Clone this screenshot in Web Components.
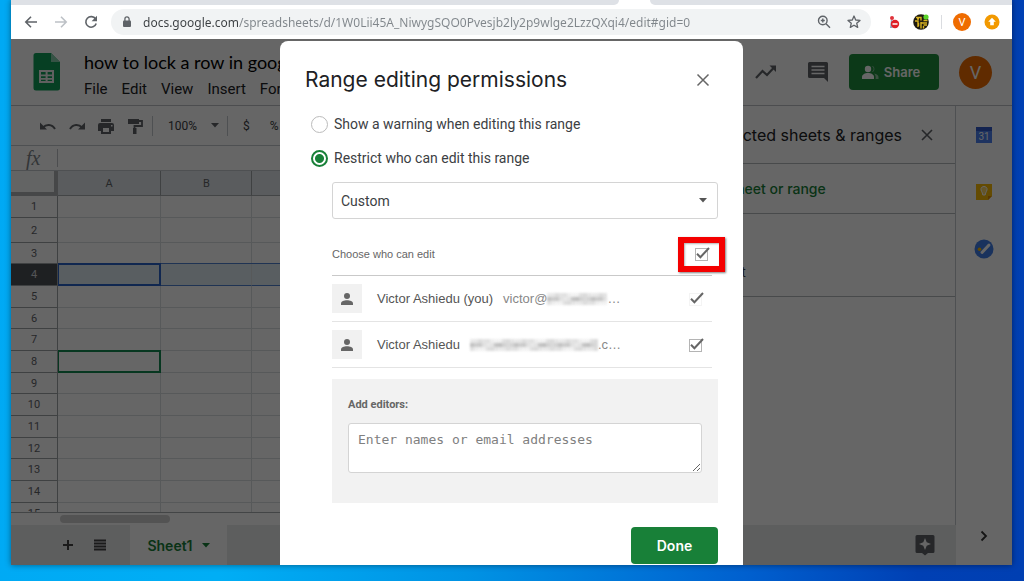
<!DOCTYPE html>
<html lang="en">
<head>
<meta charset="utf-8">
<title>how to lock a row in google sheets</title>
<style>
    html, body {
        height: 100%;
    }

    body {
        margin: 0;
        overflow: hidden;
        font-family: Roboto, "Liberation Sans", sans-serif;
        background: linear-gradient(95deg, #00a9f4 0%, #00aef5 25%, #0093e4 48%, #0060cf 74%, #0040b4 90%, #003fb2 100%);
    }
</style>
</head>
<body>
<browser-window>
    <browser-toolbar slot="toolbar"></browser-toolbar>
    <sheets-app>
        <permissions-dialog></permissions-dialog>
    </sheets-app>
</browser-window>

<script>
    class BaseElement extends HTMLElement {
        constructor() {
            super();
            this.attachShadow({ mode: 'open' });
        }

        connectedCallback() {
            this.shadowRoot.innerHTML = `
                <style>
                    *, :host { box-sizing: border-box; }
                    button {
                        border: none;
                        background: none;
                        padding: 0;
                        margin: 0;
                        font: inherit;
                        color: inherit;
                        display: flex;
                        align-items: center;
                        justify-content: center;
                        cursor: pointer;
                    }
                    svg { display: block; flex: none; }
                </style>
                ${this.template()}
            `;
        }
    }

    class BrowserWindow extends BaseElement {
        template() {
            return `
                <style>
                    :host {
                        display: block;
                        height: 100%;
                        padding: 0 12px 16px 11px;
                    }
                    .frame {
                        height: 100%;
                        display: flex;
                        flex-direction: column;
                        background: #fff;
                        box-shadow: 0 0 6px rgba(0, 0, 0, 0.45);
                    }
                    .tabs {
                        display: flex;
                        height: 5px;
                        flex: none;
                    }
                    .tabs span { background: #dee1e6; }
                    .before { flex: 608; border-bottom-right-radius: 5px; }
                    .active { width: 31px; }
                    .after { flex: 362; border-bottom-left-radius: 5px; }
                </style>
                <div class="frame">
                    <div class="tabs">
                        <span class="before"></span>
                        <div class="active"></div>
                        <span class="after"></span>
                    </div>
                    <slot name="toolbar"></slot>
                    <slot></slot>
                </div>
            `;
        }
    }
    customElements.define('browser-window', BrowserWindow);

    class BrowserToolbar extends BaseElement {
        template() {
            return `
                <style>
                    :host {
                        display: flex;
                        align-items: center;
                        flex: none;
                        height: 34px;
                        padding: 0 12px;
                        color: #5f6368;
                    }
                    .nav { display: flex; gap: 14px; }
                    .omnibox {
                        flex: 1;
                        display: flex;
                        align-items: center;
                        gap: 9px;
                        height: 26px;
                        margin: 0 14px 0 12px;
                        padding: 0 9px;
                        border-radius: 13px;
                        background: #f1f3f4;
                    }
                    input {
                        flex: 1;
                        min-width: 0;
                        border: none;
                        padding: 0;
                        outline: none;
                        font: 12px "Noto Sans", "Open Sans", sans-serif;
                        color: transparent;
                        background: linear-gradient(90deg, #3c4043 96px, #80868b 96px);
                        -webkit-background-clip: text;
                        background-clip: text;
                    }
                    .mark { margin-right: 5px; }
                    .extensions { display: flex; align-items: center; }
                    .ext { width: 18px; height: 18px; margin-right: 9px; }
                    .sep { width: 1px; height: 14px; background: #dadce0; margin: 0 11px 0 2px; }
                    .avatar {
                        width: 18px;
                        height: 18px;
                        border-radius: 50%;
                        background: #ef6c00;
                        color: #fff;
                        font-size: 11px;
                        margin-right: 13px;
                    }
                </style>
                <div class="nav">
                    <button aria-label="Back"><svg width="16" height="16" viewBox="0 0 16 16" fill="none" stroke="#5f6368" stroke-width="1.6"><path d="M14 8H3M8 2.8L2.8 8 8 13.2"/></svg></button>
                    <button aria-label="Forward"><svg width="16" height="16" viewBox="0 0 16 16" fill="none" stroke="#bdc1c6" stroke-width="1.6"><path d="M2 8h11M8 2.8L13.2 8 8 13.2"/></svg></button>
                    <button aria-label="Reload"><svg width="16" height="16" viewBox="0 0 16 16"><path d="M12.6 5A5.3 5.3 0 1 0 13.2 9.5" fill="none" stroke="#5f6368" stroke-width="1.6"/><path d="M14 1.8v5.4H8.6z" fill="#5f6368"/></svg></button>
                </div>
                <div class="omnibox">
                    <svg width="14" height="14" viewBox="0 0 14 14"><rect x="3" y="5.5" width="8" height="6.5" rx="1" fill="#5f6368"/><path d="M4.9 6V4a2.1 2.1 0 0 1 4.2 0v2" fill="none" stroke="#5f6368" stroke-width="1.3"/></svg>
                    <input type="text" aria-label="Address" value="docs.google.com/spreadsheets/d/1W0Lii45A_NiwygSQO0Pvesjb2ly2p9wlge2LzzQXqi4/edit#gid=0">
                    <button class="mark" aria-label="Zoom"><svg width="16" height="16" viewBox="0 0 16 16" fill="none" stroke="#5f6368" stroke-width="1.4"><circle cx="6.8" cy="6.5" r="4.3"/><path d="M10 9.7l4 4M4.8 6.5h4M6.8 4.5v4"/></svg></button>
                    <button aria-label="Bookmark"><svg width="16" height="16" viewBox="0 0 16 16" fill="none" stroke="#5f6368" stroke-width="1.3" stroke-linejoin="round"><path d="M8 2l1.7 4 4.3.4-3.3 2.8 1 4.2L8 11.2l-3.7 2.2 1-4.2L2 6.4 6.3 6z"/></svg></button>
                </div>
                <div class="extensions">
                    <button class="ext" aria-label="Blocker"><svg width="18" height="18" viewBox="0 0 18 18"><path d="M6 6l5 6-4 3H5z" fill="#8ea6c0"/><circle cx="7" cy="5" r="2" fill="#e0323a"/><circle cx="10" cy="11" r="4.2" fill="#df1f26"/><path d="M7.5 11h5" stroke="#fff" stroke-width="1.5"/></svg></button>
                    <button class="ext" aria-label="Maze"><svg width="18" height="18" viewBox="0 0 18 18"><circle cx="9" cy="9" r="7.8" fill="#1d1a10"/><path d="M4 4.5h5v3M3 8h3v6M5 6h2M9 9v6.5M9 10h6M11.5 12H15M11.5 7.5h4M6.5 10v3M11.5 13v2.5" fill="none" stroke="#d9b321" stroke-width="1.4"/><circle cx="14" cy="4" r="2.6" fill="#5ad42a"/></svg></button>
                    <div class="sep"></div>
                    <button class="avatar">V</button>
                    <button aria-label="Update"><svg width="16" height="16" viewBox="0 0 16 16"><circle cx="8" cy="8" r="7.5" fill="#f29900"/><path d="M8 3.8l3.8 4H9.8v3.4H6.2V7.8H4.2z" fill="#fff"/></svg></button>
                </div>
            `;
        }
    }
    customElements.define('browser-toolbar', BrowserToolbar);

    class SheetsApp extends BaseElement {
        template() {
            return `
                <style>
                    :host {
                        flex: 1;
                        min-height: 0;
                        display: grid;
                        overflow: hidden;
                    }
                    .app, .scrim { grid-area: 1 / 1; min-width: 0; min-height: 0; }
                    .app { display: flex; flex-direction: column; }
                    .body { flex: 1; display: flex; min-height: 0; }
                    .main { flex: 1; display: flex; flex-direction: column; min-width: 0; }
                    .work { flex: 1; display: flex; min-height: 0; }
                    .sheet { flex: 1; display: flex; flex-direction: column; min-width: 0; overflow: hidden; }
                    .scrim {
                        display: flex;
                        justify-content: center;
                        padding-top: 2px;
                        background: rgba(0, 0, 0, 0.6);
                        z-index: 1;
                    }
                </style>
                <div class="app">
                    <sheets-header></sheets-header>
                    <div class="body">
                        <div class="main">
                            <div class="work">
                                <div class="sheet">
                                    <sheets-toolbar></sheets-toolbar>
                                    <sheet-grid></sheet-grid>
                                </div>
                                <protected-panel></protected-panel>
                            </div>
                            <sheet-tabs></sheet-tabs>
                        </div>
                        <side-rail></side-rail>
                    </div>
                </div>
                <div class="scrim"><slot></slot></div>
            `;
        }
    }
    customElements.define('sheets-app', SheetsApp);

    class SheetsHeader extends BaseElement {
        template() {
            return `
                <style>
                    :host {
                        display: flex;
                        align-items: center;
                        flex: none;
                        height: 67px;
                        padding: 0 20px 0 22px;
                        border-bottom: 1px solid #bdc1c6;
                    }
                    .doc { flex: 1; margin-left: 23px; padding-top: 4px; min-width: 0; }
                    h1 {
                        margin: 0 0 5px;
                        font: 18px/24px Lato, sans-serif;
                        color: #000;
                        white-space: nowrap;
                    }
                    .menu { display: flex; gap: 14px; font-size: 15px; line-height: 20px; color: #202124; }
                    .activity { margin-right: 29px; }
                    .comments { margin-right: 20px; }
                    .share {
                        height: 36px;
                        width: 90px;
                        padding-right: 6px;
                        gap: 5px;
                        border-radius: 4px;
                        background: #1e8e3e;
                        color: #fff;
                        font: 600 13px Inter, sans-serif;
                    }
                    .avatar {
                        width: 33px;
                        height: 33px;
                        margin-left: 20px;
                        border-radius: 50%;
                        background: #ef6c00;
                        color: #fff;
                        font-size: 18px;
                    }
                </style>
                <svg width="28" height="38" viewBox="0 0 28 38"><path d="M3 0h15l9 9v26a2.5 2.5 0 0 1-2.5 2.5H3A2.5 2.5 0 0 1 .5 35V2.5A2.5 2.5 0 0 1 3 0z" fill="#0f9d58"/><path d="M18 0l9 9h-9z" fill="#87ceac"/><path d="M6 17h15v13H6zM8 19v2.4h4.6V19zm6.6 0v2.4H19V19zM8 23.2v1.9h4.6v-1.9zm6.6 0v1.9H19v-1.9zM8 26.8V28h4.6v-1.2zm6.6 0V28H19v-1.2z" fill="#f1f1f1" fill-rule="evenodd"/></svg>
                <div class="doc">
                    <h1>how to lock a row in google sheets</h1>
                    <div class="menu">
                        <button>File</button>
                        <button>Edit</button>
                        <button>View</button>
                        <button>Insert</button>
                        <button>Format</button>
                    </div>
                </div>
                <button class="activity" aria-label="Activity"><svg width="24" height="24" viewBox="0 0 24 24"><path d="M2 18l6.5-7 4.5 4 7-7.5" fill="none" stroke="#5f6368" stroke-width="2.2"/><path d="M15.5 5.5H22V12z" fill="#5f6368"/></svg></button>
                <button class="comments" aria-label="Comments"><svg width="22" height="22" viewBox="0 0 22 22"><path d="M2.5 1h17A1.5 1.5 0 0 1 21 2.5V21l-4-4H2.5A1.5 1.5 0 0 1 1 15.5v-13A1.5 1.5 0 0 1 2.5 1z" fill="#5f6368"/><path d="M4.5 5.5h13M4.5 9h13M4.5 12.5h13" stroke="#fff" stroke-width="1.6"/></svg></button>
                <button class="share"><svg width="17" height="15" viewBox="0 0 17 15" fill="#fff"><circle cx="6" cy="4" r="3.2"/><path d="M0 14v-2c0-2.5 3-4 6-4s6 1.5 6 4v2z"/><path d="M9.6 7a3.2 3.2 0 0 0 0-6 3 3 0 0 1 2.8 3 3 3 0 0 1-2.8 3zM12 8.5c2.5.4 4.5 1.7 4.5 3.5v2h-2.9v-2c0-1.5-.6-2.6-1.6-3.5z" opacity=".5"/></svg>Share</button>
                <button class="avatar">V</button>
            `;
        }
    }
    customElements.define('sheets-header', SheetsHeader);

    class SheetsToolbar extends BaseElement {
        template() {
            return `
                <style>
                    :host { display: block; flex: none; color: #5f6368; }
                    .tools {
                        display: flex;
                        align-items: center;
                        height: 40px;
                        padding-left: 28px;
                        border-bottom: 1px solid #c4c8cc;
                    }
                    .icons { display: flex; gap: 11px; margin-right: 8px; }
                    .sep { width: 1px; height: 20px; background: #c4c8cc; }
                    .text { font-size: 12px; white-space: nowrap; color: #3c4043; }
                    .zoom { gap: 14px; margin: 0 8px 0 15px; }
                    .money { margin: 0 20px 0 15px; }
                    .fx {
                        display: flex;
                        align-items: center;
                        height: 25px;
                        border-bottom: 1px solid #c4c8cc;
                        padding-left: 15px;
                        font: italic 20px "Liberation Serif", serif;
                        color: #80868b;
                    }
                    .fx i { width: 31px; }
                    .fx span { width: 1px; height: 18px; background: #bdc1c6; }
                </style>
                <div class="tools">
                    <div class="icons">
                        <button aria-label="Undo"><svg width="18" height="18" viewBox="0 0 18 18"><path d="M4 10.5c3-3.5 9-3.8 12 1.5" fill="none" stroke="#5f6368" stroke-width="2"/><path d="M1 5.5v7h7z" fill="#5f6368"/></svg></button>
                        <button aria-label="Redo"><svg width="18" height="18" viewBox="0 0 18 18"><path d="M14 10.5c-3-3.5-9-3.8-12 1.5" fill="none" stroke="#5f6368" stroke-width="2"/><path d="M17 5.5v7h-7z" fill="#5f6368"/></svg></button>
                        <button aria-label="Print"><svg width="18" height="18" viewBox="0 0 18 18" fill="#5f6368"><path d="M4 2h10v3H4z"/><path fill-rule="evenodd" d="M3 6h12a2 2 0 0 1 2 2v6h-3v3H4v-3H1V8a2 2 0 0 1 2-2zm3 5v4h6v-4zm8-3v1.5h1.5V8z"/></svg></button>
                        <button aria-label="Paint format"><svg width="18" height="18" viewBox="0 0 18 18"><path d="M2 2h11v5H2z" fill="#5f6368"/><path d="M13 4h3v5H8.5v8" fill="none" stroke="#5f6368" stroke-width="1.8"/><path d="M7 11h3.5v6H7z" fill="#5f6368"/></svg></button>
                    </div>
                    <div class="sep"></div>
                    <button class="text zoom">100%<svg width="8" height="5" viewBox="0 0 8 5"><path d="M0 0h8L4 4.5z" fill="#5f6368"/></svg></button>
                    <div class="sep"></div>
                    <button class="text money">$</button>
                    <button class="text">%</button>
                </div>
                <div class="fx"><i>fx</i><span></span></div>
            `;
        }
    }
    customElements.define('sheets-toolbar', SheetsToolbar);

    class SheetGrid extends BaseElement {
        template() {
            const cols = ['A', 'B', 'C', 'D', 'E'];
            const rows = [];
            for (let i = 1; i <= 15; i++) {
                rows.push(`<tr class="r${i}"><th>${i}</th>${cols.map(() => '<td></td>').join('')}</tr>`);
            }
            return `
                <style>
                    :host {
                        flex: 1;
                        min-height: 0;
                        display: flex;
                        flex-direction: column;
                    }
                    .scroll { flex: 1; min-height: 0; overflow: hidden; border-bottom: 1px solid #a8acb0; }
                    table {
                        table-layout: fixed;
                        border-collapse: separate;
                        border-spacing: 0;
                        width: 515px;
                    }
                    .head { width: 47px; }
                    .a { width: 103px; }
                    .b { width: 91px; }
                    th, td { padding: 0; }
                    th {
                        font-weight: normal;
                        font-size: 11px;
                        color: #5f6368;
                        border-bottom: 1px solid #9ea2a6;
                        border-right: 1px solid #9ea2a6;
                    }
                    td { border-right: 1px solid #dadfe2; border-bottom: 1px solid #dadfe2; }
                    thead th { height: 25px; background: #e1e7ea; border-bottom-color: #a8acb0; }
                    thead th:first-child {
                        background: #f8f9fa;
                        border-right: 4px solid #b0b2b4;
                        border-bottom: 4px solid #b0b2b4;
                    }
                    tbody tr { height: 22px; }
                    tbody tr:nth-child(3n) { height: 21px; }
                    tbody .r2 { height: 25px; }
                    .r4 th { background: #4d5156; color: #d0d3d6; }
                    .r4 td {
                        background: #dfebf2;
                        border-bottom-color: #4f7fd0;
                        box-shadow: 0 -1px #4f7fd0;
                    }
                    .r4 td:nth-child(2) { box-shadow: 0 -1px #2a62c8, inset 0 0 0 1px #2a62c8; border-color: #2a62c8; }
                    .r8 td:nth-child(2) { box-shadow: 0 -1px #128a52, inset 0 0 0 1px #128a52; border-color: #128a52; }
                    .track { flex: none; height: 12px; padding: 2px 0 2px 49px; }
                    .thumb { width: 110px; height: 8px; border-radius: 4px; background: #cfcfcf; }
                </style>
                <div class="scroll">
                    <table>
                        <colgroup><col class="head"><col class="a"><col class="b"><col class="b"><col class="b"><col class="b"></colgroup>
                        <thead><tr><th></th>${cols.map(c => `<th>${c}</th>`).join('')}</tr></thead>
                        <tbody>${rows.join('')}</tbody>
                    </table>
                </div>
                <div class="track"><div class="thumb"></div></div>
            `;
        }
    }
    customElements.define('sheet-grid', SheetGrid);

    class ProtectedPanel extends BaseElement {
        template() {
            return `
                <style>
                    :host {
                        display: block;
                        flex: none;
                        width: 300px;
                        border-left: 1px solid #dadce0;
                        border-right: 1px solid #c4c8cc;
                        font-family: Inter, sans-serif;
                    }
                    header, .add, .item {
                        display: flex;
                        align-items: center;
                        border-bottom: 1px solid #b4b9bc;
                        white-space: nowrap;
                    }
                    header { height: 58px; justify-content: flex-end; gap: 18px; padding-right: 21px; }
                    h2 { margin: 0; font-size: 16px; font-weight: 400; color: #202124; }
                    .add { height: 50px; padding-left: 16px; }
                    a { color: #188038; text-decoration: none; font-size: 14px; font-weight: 500; }
                    .item { height: 83px; padding: 34px 0 0 25px; font-size: 13px; color: #3c4043; }
                </style>
                <header>
                    <h2>Protected sheets &amp; ranges</h2>
                    <button aria-label="Close"><svg width="14" height="14" viewBox="0 0 14 14"><path d="M2 2l10 10M12 2L2 12" stroke="#5f6368" stroke-width="1.6"/></svg></button>
                </header>
                <div class="add"><a href="#">+ Add a sheet or range</a></div>
                <div class="item">This sheet</div>
            `;
        }
    }
    customElements.define('protected-panel', ProtectedPanel);

    class SheetTabs extends BaseElement {
        template() {
            return `
                <style>
                    :host {
                        display: flex;
                        align-items: center;
                        flex: none;
                        height: 40px;
                        padding: 0 21px 0 50px;
                        background: #e8ebec;
                    }
                    .icon { width: 14px; margin-right: 18px; }
                    .tab {
                        height: 100%;
                        width: 97px;
                        gap: 9px;
                        margin-left: 5px;
                        background: #fff;
                        color: #188038;
                        font: 600 14px Inter, sans-serif;
                    }
                    .explore { margin-left: auto; }
                </style>
                <button class="icon" aria-label="Add sheet"><svg width="12" height="12" viewBox="0 0 12 12"><path d="M6 1v10M1 6h10" stroke="#444" stroke-width="2"/></svg></button>
                <button class="icon" aria-label="All sheets"><svg width="14" height="14" viewBox="0 0 14 14"><path d="M1 2.5h12M1 5.5h12M1 8.5h12M1 11.5h12" stroke="#444" stroke-width="2"/></svg></button>
                <button class="tab">Sheet1<svg width="8" height="5" viewBox="0 0 8 5"><path d="M0 0h8L4 4.5z" fill="#188038"/></svg></button>
                <button class="explore" aria-label="Explore"><svg width="20" height="22" viewBox="0 0 20 22"><path d="M2 1h16a1.5 1.5 0 0 1 1.5 1.5v15A1.5 1.5 0 0 1 18 19h-5l-3 2.5L7 19H2A1.5 1.5 0 0 1 .5 17.5v-15A1.5 1.5 0 0 1 2 1z" fill="#5f6368"/><path d="M10 4l1.7 4.3L16 10l-4.3 1.7L10 16l-1.7-4.3L4 10l4.3-1.7z" fill="#fff"/></svg></button>
            `;
        }
    }
    customElements.define('sheet-tabs', SheetTabs);

    class SideRail extends BaseElement {
        template() {
            return `
                <style>
                    :host {
                        display: flex;
                        flex-direction: column;
                        align-items: center;
                        flex: none;
                        width: 56px;
                        padding: 19px 0 20px;
                        gap: 37px;
                    }
                    .more { margin-top: auto; }
                </style>
                <button aria-label="Calendar"><svg width="20" height="20" viewBox="0 0 20 20"><path d="M2 2h16v16H2z" fill="#4c7ff0"/><path d="M2 2h16v4H2z" fill="#3057c8"/><text x="10" y="15" text-anchor="middle" font-family="Roboto, sans-serif" font-size="10" fill="#fff">31</text></svg></button>
                <button aria-label="Keep"><svg width="20" height="20" viewBox="0 0 20 20"><path d="M2 2h16v12l-4 4H2z" fill="#f9bb05"/><path d="M18 14l-4 4v-4z" fill="#e08c00"/><path d="M7 6.5a3.2 3.2 0 0 1 6 0c.6 2-1.5 3.5-1.8 6.5H8.8C8.5 10 6.4 8.500 7 6.5z" fill="#fbd66a" stroke="#fff" stroke-width="1"/></svg></button>
                <button aria-label="Tasks"><svg width="20" height="20" viewBox="0 0 20 20"><circle cx="10" cy="10" r="9.5" fill="#3f7de8"/><path d="M8 13.5l7-7.5" stroke="#fff" stroke-width="3" stroke-linecap="round"/><circle cx="5.5" cy="10.3" r="1.8" fill="#fbbc04"/></svg></button>
                <button class="more" aria-label="Hide side panel"><svg width="18" height="18" viewBox="0 0 18 18"><path d="M6.5 4.5L11 9l-4.5 4.5" fill="none" stroke="#333" stroke-width="1.8"/></svg></button>
            `;
        }
    }
    customElements.define('side-rail', SideRail);

    class TickBox extends BaseElement {
        template() {
            const plain = this.hasAttribute('plain');
            return `
                <style>
                    :host { display: grid; width: 16px; height: 16px; flex: none; }
                    input, svg { grid-area: 1 / 1; }
                    input {
                        appearance: none;
                        margin: 2px 0 0 1px;
                        width: 13px;
                        height: 13px;
                        border: 1px solid ${plain ? '#f4f4f4' : '#b4b4b4'};
                        background: #fff;
                    }
                    svg { pointer-events: none; z-index: 1; }
                </style>
                <input type="checkbox" checked aria-label="${this.getAttribute('label')}">
                <svg width="16" height="16" viewBox="0 0 16 16"><path d="M3 7.8l3.4 3.4L15 2" fill="none" stroke="#666" stroke-width="2"/></svg>
            `;
        }
    }
    customElements.define('tick-box', TickBox);

    class EditorRow extends BaseElement {
        template() {
            return `
                <style>
                    :host {
                        display: flex;
                        align-items: center;
                        height: 46px;
                        padding-right: 8px;
                        border-bottom: 1px solid #e4e4e4;
                        font: 13px "Liberation Sans", Arial, sans-serif;
                        color: #555;
                    }
                    .face {
                        display: flex;
                        align-items: center;
                        justify-content: center;
                        width: 30px;
                        height: 29px;
                        margin-right: 15px;
                        background: #f1f1f1;
                    }
                    .mail { display: flex; align-items: center; margin-left: 10px; color: #888; }
                    tick-box { margin-left: auto; }
                </style>
                <div class="face"><svg width="14" height="14" viewBox="0 0 14 14" fill="#666"><circle cx="7" cy="4" r="3"/><path d="M1 13v-1.5c0-2 3-3.2 6-3.2s6 1.2 6 3.2V13z"/></svg></div>
                <span>${this.getAttribute('name')}</span>
                <span class="mail"><slot></slot></span>
                <tick-box label="${this.getAttribute('name')}" ${this.hasAttribute('owner') ? 'plain' : ''}></tick-box>
            `;
        }
    }
    customElements.define('editor-row', EditorRow);

    // Pixelated smudge that hides part of an address
    class MosaicText extends BaseElement {
        template() {
            const cells = Number(this.getAttribute('cells'));
            const shades = [0.5, 0.75, 0.4, 0.8, 0.6, 0.35, 0.7, 0.55, 0.85, 0.3, 0.65];
            let rects = '';
            for (let i = 0; i < cells; i++) {
                for (let j = 0; j < 3; j++) {
                    const shade = shades[(i * 7 + j * 3) % shades.length] * (j === 1 ? 0.9 : 0.5);
                    rects += `<rect x="${i * 4}" y="${j * 4}" width="4" height="4" opacity="${shade.toFixed(2)}"/>`;
                }
            }
            return `
                <style>
                    :host { display: block; filter: blur(1px); }
                </style>
                <svg width="${cells * 4}" height="12" fill="#aaa">${rects}</svg>
            `;
        }
    }
    customElements.define('mosaic-text', MosaicText);

    class PermissionsDialog extends BaseElement {
        template() {
            return `
                <style>
                    :host {
                        display: flex;
                        flex-direction: column;
                        width: 463px;
                        padding: 0 25px;
                        border-radius: 8px 8px 0 0;
                        background: #fff;
                        color: #3c4043;
                    }
                    header {
                        display: flex;
                        align-items: center;
                        justify-content: space-between;
                        padding: 23px 8px 0 0;
                    }
                    h2 { margin: 0; font: 21px/32px Inter, sans-serif; color: #202124; }
                    .choices { display: grid; gap: 14px; margin: 18px 0 14px 6px; }
                    .choices label {
                        display: flex;
                        align-items: center;
                        gap: 6px;
                        font-size: 14px;
                        line-height: 20px;
                    }
                    input[type=radio] {
                        appearance: none;
                        width: 17px;
                        height: 17px;
                        margin: 0;
                        border: 1px solid #bbb;
                        border-radius: 50%;
                    }
                    input[type=radio]:checked {
                        border: 2px solid #188038;
                        background: radial-gradient(circle, #188038 4px, #fff 5px);
                    }
                    .detail { margin-left: 27px; }
                    .select { display: grid; align-items: center; }
                    .select > * { grid-area: 1 / 1; }
                    select {
                        appearance: none;
                        height: 37px;
                        padding: 0 8px;
                        border: 1px solid #d4d4d4;
                        border-radius: 3px;
                        background: #fff;
                        font: 14px Roboto, sans-serif;
                        color: #3c4043;
                    }
                    .select svg { justify-self: end; margin-right: 11px; pointer-events: none; }
                    .people { margin-right: 6px; }
                    .all {
                        display: flex;
                        align-items: flex-end;
                        justify-content: space-between;
                        height: 57px;
                        padding: 0 0 11px;
                        border-bottom: 1px solid #c9c9c9;
                        font: 11px/20px "Liberation Sans", Arial, sans-serif;
                        color: #666;
                    }
                    .callout {
                        position: relative;
                        display: flex;
                        margin: 0 2px 2px 0;
                    }
                    .callout::after {
                        content: "";
                        position: absolute;
                        inset: -9px -15px -10px -16px;
                        border: 6px solid #f40000;
                        box-shadow: 1px 1px 2px rgba(0, 0, 0, 0.5), inset 1px 1px 2px rgba(0, 0, 0, 0.3);
                        pointer-events: none;
                    }
                    .add {
                        margin-top: 11px;
                        padding: 16px 16px 30px;
                        background: #f2f2f2;
                    }
                    .add label { display: block; margin-bottom: 8px; font-size: 11px; font-weight: 700; line-height: 20px; color: #666; }
                    textarea {
                        display: block;
                        width: 100%;
                        height: 50px;
                        padding: 8px 9px;
                        border: 1px solid #d4d4d4;
                        border-radius: 3px;
                        background: #fff;
                        font: 13px/16px "DejaVu Sans Mono", monospace;
                        resize: vertical;
                        outline: none;
                    }
                    textarea::placeholder { color: #808080; }
                    .done {
                        width: 87px;
                        height: 37px;
                        margin: 24px 0 0 auto;
                        border-radius: 4px;
                        background: #188038;
                        color: #fff;
                        font: 600 14px Inter, sans-serif;
                    }
                </style>
                <header>
                    <h2>Range editing permissions</h2>
                    <button aria-label="Close"><svg width="14" height="14" viewBox="0 0 14 14"><path d="M1.5 1.5l11 11M12.5 1.5l-11 11" stroke="#666" stroke-width="1.5"/></svg></button>
                </header>
                <div class="choices">
                    <label><input type="radio" name="mode">Show a warning when editing this range</label>
                    <label><input type="radio" name="mode" checked>Restrict who can edit this range</label>
                </div>
                <div class="detail">
                    <div class="select">
                        <select aria-label="Who can edit"><option>Custom</option></select>
                        <svg width="8" height="5" viewBox="0 0 8 5"><path d="M0 0h8L4 4.5z" fill="#555"/></svg>
                    </div>
                    <div class="people">
                        <div class="all">
                            <span>Choose who can edit</span>
                            <div class="callout"><tick-box label="Choose who can edit"></tick-box></div>
                        </div>
                        <editor-row name="Victor Ashiedu (you)" owner>victor@<mosaic-text cells="15"></mosaic-text>…</editor-row>
                        <editor-row name="Victor Ashiedu"><mosaic-text cells="32"></mosaic-text>.c…</editor-row>
                    </div>
                    <div class="add">
                        <label for="editors">Add editors:</label>
                        <textarea id="editors" placeholder="Enter names or email addresses"></textarea>
                    </div>
                    <button class="done">Done</button>
                </div>
            `;
        }
    }
    customElements.define('permissions-dialog', PermissionsDialog);
</script>
</body>
</html>
